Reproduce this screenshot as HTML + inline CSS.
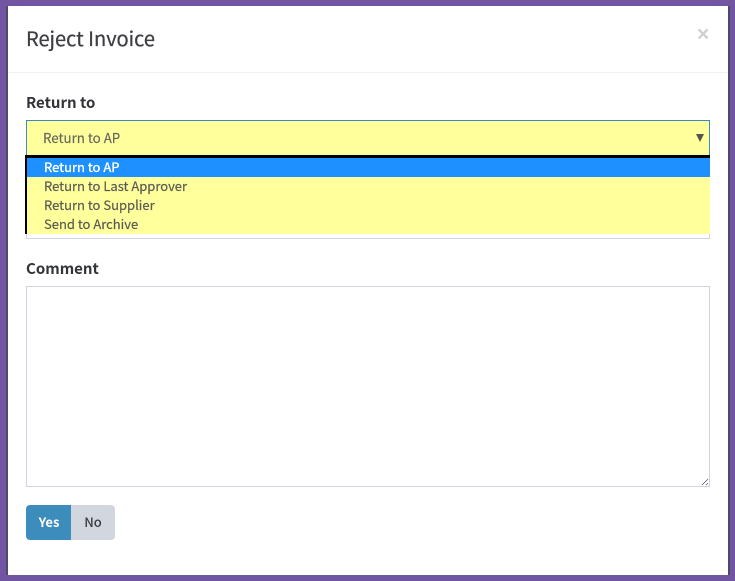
<!DOCTYPE html>
<html><head><meta charset="utf-8"><style>
*{box-sizing:border-box}
html,body{margin:0;padding:0;width:735px;height:581px;overflow:hidden;background:#7155a3}
body{position:relative;font-family:"Noto Sans CJK JP","Liberation Sans",sans-serif;color:#3a3b3f}
div{position:absolute;white-space:nowrap}
.t{line-height:20px}
.o{left:44px;font-size:13px;line-height:19px;color:#5c5c55;-webkit-text-stroke:.2px #5c5c55}
</style></head><body>
<div style="left:6px;top:6px;width:2px;height:569px;background:#4f4a6a"></div>
<div style="left:728px;top:6px;width:2px;height:569px;background:#50476a"></div>
<div style="left:8px;top:6px;width:720px;height:569px;background:#fff"></div>
<div style="left:8px;top:72px;width:720px;height:1px;background:#f0f0f2"></div>
<div class="t" style="left:26px;top:28px;font-size:20px;color:#3d3e42;-webkit-text-stroke:.25px #3d3e42">Reject Invoice</div>
<div style="left:697px;top:23px;font-size:21px;line-height:24px;font-weight:700;color:#cfcfcf;font-family:'Liberation Sans',sans-serif">×</div>
<div class="t" style="left:26px;top:93px;font-size:15px;font-weight:700;color:#333438">Return to</div>
<div style="left:26px;top:120px;width:684px;height:119px;border:1px solid #d2d5de;border-top:0"></div>
<div style="left:26px;top:120px;width:684px;height:36px;background:#ffff9c;border:1px solid #3a8bc0;border-bottom:0"></div>
<div class="t" style="left:43px;top:128px;font-size:13.3px;color:#66665c;-webkit-text-stroke:.15px #66665c">Return to AP</div>
<svg style="position:absolute;left:696px;top:133px" width="9" height="10"><path d="M0 1H8L4 9Z" fill="#55554f"/></svg>
<div style="left:25px;top:155px;width:685px;height:3px;background:#000"></div>
<div style="left:25px;top:155px;width:2px;height:79px;background:#000"></div>
<div style="left:27px;top:158px;width:683px;height:76px;background:#ffff9c"></div>
<div style="left:27px;top:158px;width:683px;height:19px;background:#1e90ff"></div>
<div class="o" style="top:157px;color:#fff;-webkit-text-stroke:.35px #fff">Return to AP</div>
<div class="o" style="top:176px">Return to Last Approver</div>
<div class="o" style="top:195px">Return to Supplier</div>
<div class="o" style="top:214px">Send to Archive</div>
<div class="t" style="left:26px;top:259px;font-size:15px;font-weight:700;color:#333438">Comment</div>
<div style="left:26px;top:286px;width:684px;height:201px;border:1px solid #d2d2e2;background:#fff"></div>
<svg style="position:absolute;left:701px;top:478px" width="8" height="8"><path d="M1 7L7 1M5 7L7 5" stroke="#555" stroke-width="1" stroke-dasharray="1 .5" fill="none"/></svg>
<div style="left:26px;top:505px;width:46px;height:35px;background:#3c8dbc;border-radius:4px 0 0 4px;color:#fff;font-size:13px;font-weight:700;text-align:center;line-height:33px">Yes</div>
<div style="left:71px;top:505px;width:44px;height:35px;background:#d2d6de;border-radius:0 4px 4px 0;color:#3a3b3f;font-size:13px;font-weight:500;text-align:center;line-height:33px">No</div>
</body></html>
